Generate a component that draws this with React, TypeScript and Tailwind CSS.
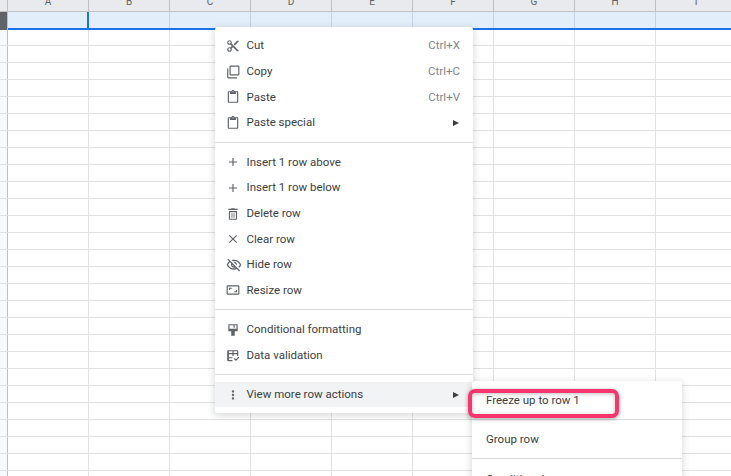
import type { ReactNode } from "react";

const columns = ["A", "B", "C", "D", "E", "F", "G", "H", "I"];

function Icon({ children }: { children: ReactNode }) {
  return (
    <svg viewBox="0 0 24 24" className="h-[14px] w-[14px] text-[#5f6368]" fill="currentColor">
      {children}
    </svg>
  );
}

const paste =
  "M19 2h-4.18C14.4.84 13.3 0 12 0c-1.3 0-2.4.84-2.82 2H5c-1.1 0-2 .9-2 2v16c0 1.1.9 2 2 2h14c1.1 0 2-.9 2-2V4c0-1.1-.9-2-2-2zm-7 0c.55 0 1 .45 1 1s-.45 1-1 1-1-.45-1-1 .45-1 1-1zm7 18H5V4h2v3h10V4h2v16z";

const icons: Record<string, ReactNode> = {
  cut: (
    <Icon>
      <path d="M9.64 7.64c.23-.5.36-1.05.36-1.64 0-2.21-1.79-4-4-4S2 3.79 2 6s1.79 4 4 4c.59 0 1.14-.13 1.64-.36L10 12l-2.36 2.36C7.14 14.13 6.59 14 6 14c-2.21 0-4 1.79-4 4s1.79 4 4 4 4-1.79 4-4c0-.59-.13-1.14-.36-1.64L12 14l7 7h3v-1L9.64 7.64zM6 8c-1.1 0-2-.89-2-2s.9-2 2-2 2 .89 2 2-.9 2-2 2zm0 12c-1.1 0-2-.89-2-2s.9-2 2-2 2 .89 2 2-.9 2-2 2zm6-7.500c-.28 0-.5-.22-.5-.5s.22-.5.5-.5.5.22.5.5-.22.5-.5.5zM19 3l-6 6 2 2 7-7V3h-3z" />
    </Icon>
  ),
  copy: (
    <Icon>
      <path d="M8 1h13c1.100 0 2 .9 2 2v13c0 1.100-.9 2-2 2H8c-1.100 0-2-.9-2-2V3c0-1.100.9-2 2-2zm0 2v13h13V3H8zM2 6h2v15h15v2H4c-1.100 0-2-.9-2-2V6z" />
    </Icon>
  ),
  paste: (
    <Icon>
      <path d={paste} />
    </Icon>
  ),
  plus: (
    <Icon>
      <path d="M19 13h-6v6h-2v-6H5v-2h6V5h2v6h6v2z" />
    </Icon>
  ),
  trash: (
    <Icon>
      <path d="M5 20c0 1.100.9 2 2 2h10c1.100 0 2-.9 2-2V7H5v13zM7 9h10v11H7V9zm8.500-6-1-1h-5l-1 1H4v2h16V3h-4.500z" />
      <path d="M9.500 10.500h1.500v8H9.500zM13 10.500h1.500v8H13z" />
    </Icon>
  ),
  close: (
    <Icon>
      <path d="M19 6.410 17.590 5 12 10.590 6.410 5 5 6.410 10.590 12 5 17.590 6.410 19 12 13.410 17.590 19 19 17.590 13.410 12z" />
    </Icon>
  ),
  hide: (
    <svg viewBox="0 0 24 24" className="h-[16px] w-[16px] text-[#5f6368]" fill="currentColor">
      <path d="M12 6c3.790 0 7.170 2.130 8.820 5.500-.59 1.220-1.420 2.270-2.410 3.120l1.410 1.410c1.390-1.230 2.490-2.770 3.180-4.530C21.270 7.110 17 4 12 4c-1.270 0-2.490.2-3.640.57l1.650 1.650C10.660 6.090 11.320 6 12 6zm-1.070 1.140L13 9.210c.57.25 1.030.71 1.280 1.280l2.070 2.070c.08-.34.140-.7.140-1.070C16.500 9.010 14.480 7 12 7c-.37 0-.72.05-1.070.14zM2.010 3.870l2.680 2.680C3.060 7.830 1.770 9.530 1 11.500 2.730 15.890 7 19 12 19c1.520 0 2.980-.29 4.320-.82l3.420 3.420 1.410-1.410L3.420 2.450 2.010 3.870zm7.500 7.500 2.610 2.610c-.04.010-.08.020-.12.020-1.380 0-2.500-1.120-2.500-2.500 0-.05.010-.08.010-.13zm-3.400-3.400 1.750 1.750c-.23.550-.36 1.150-.36 1.780 0 2.480 2.020 4.500 4.500 4.500.63 0 1.230-.13 1.770-.36l.98.980c-.88.240-1.800.38-2.750.38-3.790 0-7.170-2.130-8.820-5.500.7-1.430 1.720-2.610 2.930-3.530z" />
    </svg>
  ),
  resize: (
    <Icon>
      <path d="M3 4h18c1.100 0 2 .9 2 2v12c0 1.100-.9 2-2 2H3c-1.100 0-2-.9-2-2V6c0-1.100.9-2 2-2zm0 2v12h18V6H3z" />
      <path d="M5 8h5v2H7v2H5V8zM19 16h-5v-2h3v-2h2v4z" />
    </Icon>
  ),
  paint: (
    <Icon>
      <path d="M4 2h16v12h-5v8H9v-8H4V2zm2 2v6h12V4H6zm7 0h2v4h-2V4z" />
    </Icon>
  ),
  validation: (
    <Icon>
      <path d="M4 2h15c1.100 0 2 .9 2 2v8h-2V9h-6v3h-2V9H5v5h6v2H5v3h6v2H4c-1.100 0-2-.9-2-2V4c0-1.100.9-2 2-2zm1 2v3h6V4H5zm8 0v3h6V4h-6z" />
      <path d="m13.500 17 1.400-1.400 2.100 2.100 4.600-4.600 1.400 1.400-6 6z" />
    </Icon>
  ),
  more: (
    <Icon>
      <path d="M12 8c1.100 0 2-.9 2-2s-.9-2-2-2-2 .9-2 2 .9 2 2 2zm0 2c-1.100 0-2 .9-2 2s.9 2 2 2 2-.9 2-2-.9-2-2-2zm0 6c-1.100 0-2 .9-2 2s.9 2 2 2 2-.9 2-2-.9-2-2-2z" />
    </Icon>
  ),
};

function Item({
  icon,
  label,
  shortcut,
  arrow,
  active,
}: {
  icon: string;
  label: string;
  shortcut?: string;
  arrow?: boolean;
  active?: boolean;
}) {
  return (
    <div className={`flex h-[25.6px] items-center pl-[11px] pr-[14px] ${active ? "bg-[#f1f3f4]" : ""}`}>
      <span className="flex w-[20.5px] items-center">{icons[icon]}</span>
      <span className="flex-1 text-[#3c4043]">{label}</span>
      {shortcut && <span className="-mr-px text-[#80868b]">{shortcut}</span>}
      {arrow && <span className="h-0 w-0 border-y-[3px] border-l-[6px] border-y-transparent border-l-[#3c4043]" />}
    </div>
  );
}

function App() {
  return (
    <div
      className="relative h-[476px] w-[731px] overflow-hidden bg-white text-[11.5px]"
      style={{ fontFamily: "Roboto, sans-serif" }}
    >
      {/* column letters are cut off at the top in the screenshot */}
      <div className="flex h-[12px] overflow-hidden border-b border-[#c0c0c0] bg-[#e8eaed]">
        <div className="w-[8px] shrink-0 border-r border-[#c0c0c0]" />
        {columns.map((c) => (
          <div
            key={c}
            className="flex w-[81px] shrink-0 items-end justify-center border-r border-[#c0c0c0] pb-[3px] text-[10px] leading-[12px] text-[#5f6368]"
          >
            {c}
          </div>
        ))}
      </div>
      <div className="flex h-[18px] border-b-2 border-[#1a73e8] bg-[#e3eefb]">
        <div className="-mb-[2px] w-[8px] shrink-0 border-r border-[#c0c0c0] bg-[#5f6368]" />
        <div className="w-[81px] shrink-0 border-r-2 border-[#1a73e8]" />
        {columns.slice(1).map((c) => (
          <div key={c} className="w-[81px] shrink-0 border-r border-[#c5d2e3]" />
        ))}
      </div>
      <div className="flex h-[16px] border-b border-[#e1e1e1]">
        <div className="w-[8px] shrink-0 border-r border-[#c0c0c0] bg-[#f8f9fa]" />
        {columns.map((c) => (
          <div key={c} className="w-[81px] shrink-0 border-r border-[#e1e1e1]" />
        ))}
      </div>
      {Array.from({ length: 26 }).map((_, i) => (
        <div key={i} className="flex h-[17px] border-b border-[#e1e1e1]">
          <div className="w-[8px] shrink-0 border-r border-[#c0c0c0] bg-[#f8f9fa]" />
          {columns.map((c) => (
            <div key={c} className="w-[81px] shrink-0 border-r border-[#e1e1e1]" />
          ))}
        </div>
      ))}

      <div className="absolute left-[215px] top-[27px] w-[258px] rounded-[3px] bg-white pb-[6px] pt-[6.2px] shadow-[0_2px_6px_2px_rgba(60,64,67,0.15)]">
        <Item icon="cut" label="Cut" shortcut="Ctrl+X" />
        <Item icon="copy" label="Copy" shortcut="Ctrl+C" />
        <Item icon="paste" label="Paste" shortcut="Ctrl+V" />
        <Item icon="paste" label="Paste special" arrow />
        <div className="mb-[7px] mt-[6px] h-px bg-[#dadce0]" />
        <Item icon="plus" label="Insert 1 row above" />
        <Item icon="plus" label="Insert 1 row below" />
        <Item icon="trash" label="Delete row" />
        <Item icon="close" label="Clear row" />
        <Item icon="hide" label="Hide row" />
        <Item icon="resize" label="Resize row" />
        <div className="mb-[7px] mt-[6px] h-px bg-[#dadce0]" />
        <Item icon="paint" label="Conditional formatting" />
        <Item icon="validation" label="Data validation" />
        <div className="mb-[6.4px] mt-[6px] h-px bg-[#dadce0]" />
        <Item icon="more" label="View more row actions" arrow active />
      </div>

      <div className="absolute left-[472px] top-[381px] w-[210px] rounded-[3px] bg-white pt-[7px] text-[#3c4043] shadow-[0_2px_6px_2px_rgba(60,64,67,0.15)]">
        <div className="flex h-[26px] items-center pl-[14px]">Freeze up to row 1</div>
        <div className="mb-[7px] mt-[5px] h-px bg-[#dadce0]" />
        <div className="flex h-[26px] items-center pl-[14px]">Group row</div>
        <div className="mb-[8px] mt-[5px] h-px bg-[#dadce0]" />
        <div className="flex h-[26px] items-center pl-[14px]">Conditional</div>
      </div>

      <div className="absolute left-[468px] top-[389px] h-[29px] w-[151px] rounded-[7px] border-4 border-[#f8356f] shadow-[0_1px_4px_rgba(0,0,0,0.35),inset_0_1px_4px_rgba(0,0,0,0.25)]" />
    </div>
  );
}

export default App;
